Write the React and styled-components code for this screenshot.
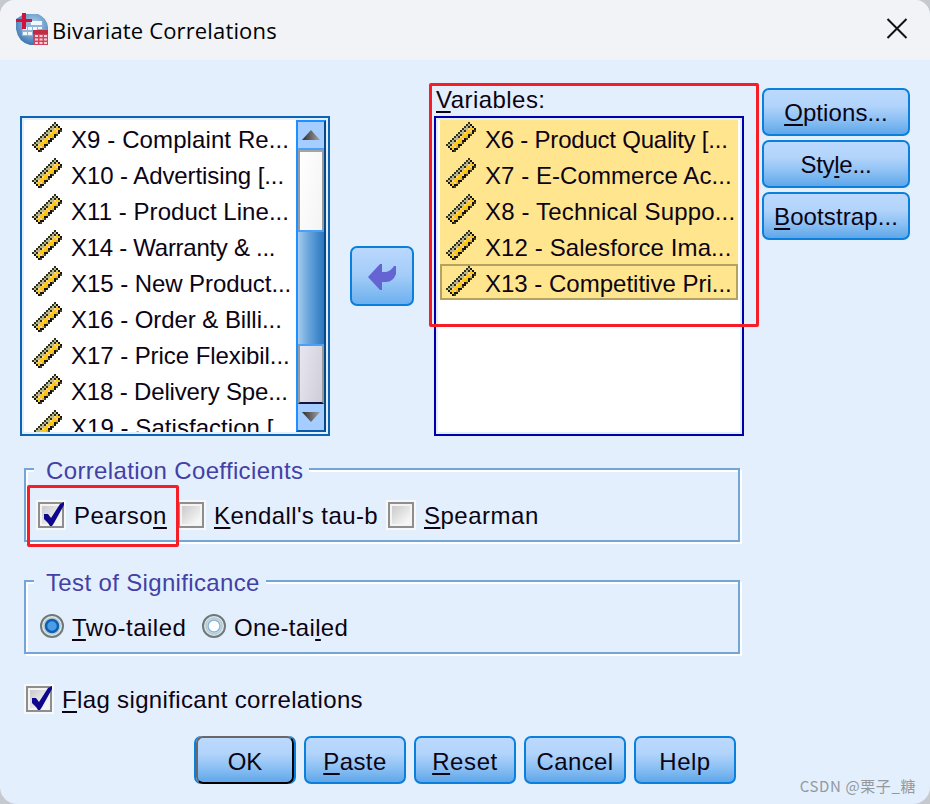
import styled, { createGlobalStyle } from 'styled-components'

const colors = {
  panel: '#e3effc',
  title: '#f1f3f6',
  blue: '#0a7fdc',
  listBorder: '#0c64b4',
  focusBorder: '#0000a8',
  selected: '#ffe68e',
  legend: '#4340a6',
  groupLine: '#74a5d8',
  mark: '#f51e26',
}

const GlobalStyle = createGlobalStyle`
  * {
    box-sizing: border-box;
  }
  body {
    margin: 0;
    background: #c6cacf;
    overflow: hidden;
  }
`

const Dialog = styled.div`
  width: 930px;
  height: 804px;
  overflow: hidden;
  display: flex;
  flex-direction: column;
  position: relative;
  border-radius: 15px 15px 17px 17px;
  background-color: ${colors.panel};
  font-family: 'Liberation Sans', Arial, sans-serif;
  font-size: 24px;
  line-height: 28px;
  color: #0c0414;
`

const TitleBar = styled.header`
  display: flex;
  align-items: center;
  height: 60px;
  padding: 0 22px 2px 16px;
  background-color: ${colors.title};
`

const Title = styled.h1`
  flex: 1;
  margin: 2px 0 0 4px;
  font-family: 'Open Sans', 'Noto Sans', sans-serif;
  font-size: 22px;
  font-weight: 400;
  letter-spacing: 0.15px;
  color: #000;
`

const CloseButton = styled.button`
  display: flex;
  padding: 0;
  border: 0;
  background: none;
`

const Content = styled.main`
  flex: 1;
  display: flex;
  flex-direction: column;
  padding: 28px 20px 20px;
`

const Pickers = styled.section`
  display: flex;
  align-items: flex-start;
  height: 348px;
`

const VariableList = styled.div`
  display: flex;
  width: 310px;
  height: 320px;
  margin-top: ${({ $top }) => $top || 0}px;
  padding: 2px ${({ $focused }) => ($focused ? 4 : 2)}px;
  border: 2px solid ${({ $focused }) => ($focused ? colors.focusBorder : colors.listBorder)};
  background-color: #fff;
  box-shadow: inset 0 0 0 2px ${colors.panel};
`

const Items = styled.ul`
  flex: 1;
  min-width: 0;
  margin: 0;
  padding: 0;
  list-style: none;
  overflow: hidden;
`

const Item = styled.li`
  display: flex;
  align-items: flex-start;
  height: 36px;
  padding: ${({ $current }) => ($current ? '0 0 0 4px' : '2px 0 0 6px')};
  border: ${({ $current }) => ($current ? '2px solid #b3a262' : '0')};
  background-color: ${({ $selected }) => ($selected ? colors.selected : '#fff')};
  line-height: 27px;
  white-space: nowrap;
`

const ItemLeft = styled(Item)`
  padding-left: 8px;
`

const Name = styled.span`
  margin: 4px 0 0 7px;
  letter-spacing: ${({ $track }) => $track || 0}px;
`

const Ruler = styled.svg`
  flex: none;
  width: 32px;
  height: 32px;
`

const ScrollBar = styled.div`
  display: flex;
  flex-direction: column;
  width: 30px;
  height: 312px;
  border: 2px solid #1e90ff;
  border-right-color: #0a4884;
  border-bottom-color: #0a5ca8;
`

const ScrollArrow = styled.button`
  display: flex;
  align-items: center;
  justify-content: center;
  height: 26px;
  padding: 0;
  border: 0;
  background-color: #a5cdff;
`

const Track = styled.div`
  height: ${({ $height }) => $height}px;
  border: 2px solid #979a9e;
  border-width: 2px 2px 0;
  border-top-color: #4aa0f4;
  background: linear-gradient(100deg, ${({ $from }) => $from}, ${({ $to }) => $to});
  box-shadow: ${({ $first }) => ($first ? 'inset 0 2px #a4a4a4' : 'none')};
`

const LastTrack = styled(Track)`
  border-bottom: 2px solid #14143c;
`

const Thumb = styled.div`
  flex: 1;
  border-top: 2px solid #4aa0f4;
  background: linear-gradient(90deg, #a6cbed, #6aa6dc 40%, #3a82c8 85%, #2d78c2);
`

const MoveButton = styled.button`
  display: flex;
  align-items: center;
  justify-content: center;
  width: 64px;
  height: 60px;
  margin: 158px 20px 0;
  padding: 2px 0 0;
  border: 2px solid ${colors.blue};
  border-radius: 7px;
  background: linear-gradient(#bbd8fe, #a2ccf8 50%, #6cb0ef);
`

const Target = styled.div`
  position: relative;
  width: 310px;
`

const TargetLabel = styled.label`
  display: block;
  height: 28px;
  padding-left: 2px;
  line-height: 23px;
  letter-spacing: 0.45px;
`

const Mark = styled.div`
  position: absolute;
  left: ${({ $x }) => $x}px;
  top: ${({ $y }) => $y}px;
  width: ${({ $w }) => $w}px;
  height: ${({ $h }) => $h}px;
  border: 3px solid ${colors.mark};
  border-radius: 2px;
  pointer-events: none;
`

const Side = styled.div`
  display: flex;
  flex-direction: column;
  gap: 4px;
  margin-left: 18px;
`

const PushButton = styled.button`
  width: ${({ $wide }) => ($wide ? 148 : 102)}px;
  height: 48px;
  padding: ${({ $wide }) => ($wide ? 2 : 3)}px 0 0;
  border: 2px solid ${colors.blue};
  border-radius: 7px;
  background: linear-gradient(#bcd9fe, #b2d4fb 35%, #8fc2f4 65%, #5fa7ea);
  font: inherit;
  color: inherit;
  letter-spacing: ${({ $track }) => $track || 0}px;
`

const DefaultButton = styled(PushButton)`
  width: 98px;
  margin: 0 2px;
  border-color: #68686c #000 #000 #68686c;
  box-shadow: -2px 0 ${colors.blue}, 2px 0 ${colors.blue};
`

const Key = styled.span`
  text-decoration: underline;
  text-decoration-thickness: 2px;
  text-underline-offset: 3px;
  text-decoration-skip-ink: none;
`

const Group = styled.section`
  position: relative;
  width: 716px;
  height: 74px;
  margin: ${({ $top }) => $top}px 0 0 4px;
  border: 2px solid ${colors.groupLine};
  box-shadow: inset 2px 2px #fff, 2px 2px #fff;
`

const Legend = styled.h2`
  width: fit-content;
  margin: -12px 0 0 8px;
  padding: 0 6px 0 12px;
  background-color: ${colors.panel};
  font-size: 24px;
  font-weight: 400;
  line-height: 26px;
  color: ${colors.legend};
  letter-spacing: ${({ $track }) => $track || 0}px;
`

const Options = styled.div`
  display: flex;
  padding: ${({ $pad }) => $pad};
`

const Option = styled.label`
  display: flex;
  align-items: center;
  gap: ${({ $gap }) => $gap || 10}px;
  width: ${({ $width }) => ($width ? `${$width}px` : 'auto')};
  height: 28px;
  white-space: nowrap;
  letter-spacing: ${({ $track }) => $track || 0}px;
`

const Box = styled.span`
  flex: none;
  display: flex;
  width: 26px;
  height: 26px;
  margin-bottom: 2px;
  border: 2px solid #8e8e8e;
  background: linear-gradient(135deg, #c4c4c6, #f6f6f6 80%);
  box-shadow: 0 0 0 2px #f6f8fa, inset 0 0 0 2px #f4f4f4;
`

const CheckMark = styled.svg`
  flex: none;
  width: 22px;
  height: 22px;
  overflow: visible;
`

const RadioDot = styled.svg`
  flex: none;
  width: 24px;
  height: 24px;
  margin-bottom: 4px;
`

const FlagRow = styled.div`
  margin: 32px 0 0 6px;
`

const Footer = styled.footer`
  display: flex;
  gap: 8px;
  margin: 22px 0 0 174px;
`

const Watermark = styled.span`
  position: absolute;
  right: 14px;
  bottom: 6px;
  font-family: 'Noto Sans CJK SC', sans-serif;
  font-size: 15px;
  line-height: 24px;
  letter-spacing: 0.6px;
  color: #93999f;
`

// name and letter spacing of every row
const source = [
  ['X9 - Complaint Re...', 0.1],
  ['X10 - Advertising [...', -0.08],
  ['X11 - Product Line...', 0.05],
  ['X14 - Warranty & ...', -0.28],
  ['X15 - New Product...', -0.06],
  ['X16 - Order & Billi...', -0.06],
  ['X17 - Price Flexibil...', -0.06],
  ['X18 - Delivery Spe...', -0.16],
  ['X19 - Satisfaction [...', 0.05],
]

const target = [
  ['X6 - Product Quality [...', -0.22],
  ['X7 - E-Commerce Ac...', 0.06],
  ['X8 - Technical Suppo...', 0.17],
  ['X12 - Salesforce Ima...', 0.1],
  ['X13 - Competitive Pri...', 0],
]

// the scale icon lives on a 16x16 grid, its bands follow x + y
function rulerColor(x, y) {
  const d = x + y
  const along = x - y
  if (d < 11 || d > 18 || Math.abs(along) > 11) return null
  if (d === 18 && along < -10) return null
  if (d === 11) return '#30301c'
  if (d === 18) return Math.abs(along) % 4 === 0 ? '#14140c' : '#45432c'
  if (Math.abs(along) === 11) return '#14140c'
  if (d === 12) return '#b4b894'
  if (d === 13) return Math.abs(along) % 4 === 1 ? '#2c2c1c' : '#b4b880'
  if (d === 14) return along % 4 === 0 ? '#ffd0a0' : '#d4cb80'
  if (d === 17) return Math.abs(along) % 4 === 1 ? '#14140c' : '#e0b430'
  if (d === 16 && along % 8 === 0) return '#ffcba0'
  return '#ffc80c'
}

const rulerCells = []
for (let y = 0; y < 16; y++) {
  for (let x = 0; x < 16; x++) {
    const fill = rulerColor(x, y)
    if (fill) rulerCells.push({ x, y, fill })
  }
}

function RulerIcon() {
  return (
    <Ruler viewBox="0 0 16 16" shapeRendering="crispEdges">
      {rulerCells.map(({ x, y, fill }) => (
        <rect key={`${x}-${y}`} x={x} y={y} width="1" height="1" fill={fill} />
      ))}
    </Ruler>
  )
}

function AppIcon() {
  return (
    <svg width="32" height="32" viewBox="0 0 32 32">
      <defs>
        <radialGradient id="globe" cx="0.55" cy="0.35" r="0.65">
          <stop offset="0" stopColor="#b9d4ea" />
          <stop offset="0.6" stopColor="#6fa0cd" />
          <stop offset="1" stopColor="#3c74b2" />
        </radialGradient>
      </defs>
      <path d="M8 1h14q9 4 10 13v18H14Q2 29 0 16V6z" fill="url(#globe)" />
      <path d="M6 10h20v13H6z" fill="#8fb5da" />
      <path d="M15 8h11v4H15zM7 14h4v3H7zM12 14h4v3h-4zM17 14h4v3h-4zM22 14h4v2h-4zM7 19h4v3H7zM12 19h4v3h-4z" fill="#f2f7fc" />
      <path d="M6 0h4v6h6v3h-6v7H6V9H0V6h6z" fill="#d3123c" />
      <path d="M17 17h15v15H17z" fill="#cc4460" />
      <path d="M17 17h15v4H17z" fill="#c02c44" />
      <path d="M19 22h3v2h-3zM23.500 22h3v2h-3zM28 22h3v2h-3zM19 25.500h3v2h-3zM23.500 25.500h3v2h-3zM28 25.500h3v2h-3zM19 29h3v2h-3zM23.500 29h3v2h-3zM28 29h3v2h-3z" fill="#f8cdd5" />
    </svg>
  )
}

function Checkbox({ checked }) {
  return (
    <Box>
      {checked && (
        <CheckMark viewBox="0 0 22 22">
          <path d="M4 10h4l3 4L20 0l4-2v3L14 19l-2 3h-2l-2-3-4-4z" fill="#10088c" />
        </CheckMark>
      )}
    </Box>
  )
}

function Radio({ checked }) {
  return (
    <RadioDot viewBox="0 0 24 24">
      <circle cx="12" cy="12" r="11" fill="#dcebf0" stroke="#707878" strokeWidth="2" />
      <circle cx="12" cy="12" r="8" fill="none" stroke="#b8c8cc" strokeWidth="1.500" />
      <circle cx="12" cy="12" r="6" fill={checked ? '#4c9ce8' : '#fff'} stroke={checked ? '#0c60b4' : '#88b4dc'} strokeWidth={checked ? 2.5 : 1.5} />
    </RadioDot>
  )
}

function ArrowIcon({ down }) {
  return (
    <svg width="18" height="10" viewBox="0 0 18 10">
      <defs>
        <linearGradient id="tip">
          <stop offset="0" stopColor="#2c2c2c" />
          <stop offset="1" stopColor="#a4a4a4" />
        </linearGradient>
      </defs>
      <path d={down ? 'M0 0h18L9 10z' : 'M9 0l9 10H0z'} fill="url(#tip)" />
    </svg>
  )
}

function App() {
  return (
    <>
      <GlobalStyle />
      <Dialog>
        <TitleBar>
          <AppIcon />
          <Title>Bivariate Correlations</Title>
          <CloseButton aria-label="Close">
            <svg width="22" height="22" viewBox="0 0 22 22" fill="none" stroke="#111" strokeWidth="2">
              <path d="M1.500 1l19 19M20.500 1l-19 19" />
            </svg>
          </CloseButton>
        </TitleBar>
        <Content>
          <Pickers>
            <VariableList $top={28}>
              <Items>
                {source.map(([name, track]) => (
                  <ItemLeft key={name}>
                    <RulerIcon />
                    <Name $track={track}>{name}</Name>
                  </ItemLeft>
                ))}
              </Items>
              <ScrollBar>
                <ScrollArrow aria-label="Up"><ArrowIcon /></ScrollArrow>
                <Track $height={82} $first $from="#ffffff" $to="#f4f4f4" />
                <Thumb />
                <LastTrack $height={60} $from="#e8e6f0" $to="#cfced8" />
                <ScrollArrow aria-label="Down"><ArrowIcon down /></ScrollArrow>
              </ScrollBar>
            </VariableList>
            <MoveButton aria-label="Move">
              <svg width="28" height="26" viewBox="0 0 28 26" fill="#6464d2">
                <path d="M0 13L12 0h2v8h4q5-1 8-6h2v8q-3 8-10 8h-4v8h-2z" />
              </svg>
            </MoveButton>
            <Target>
              <TargetLabel><Key>V</Key>ariables:</TargetLabel>
              <VariableList $focused>
                <Items>
                  {target.map(([name, track], i) => (
                    <Item key={name} $selected $current={i === target.length - 1}>
                      <RulerIcon />
                      <Name $track={track}>{name}</Name>
                    </Item>
                  ))}
                </Items>
              </VariableList>
              <Mark $x={-5} $y={-5} $w={330} $h={244} />
            </Target>
            <Side>
              <PushButton $wide $track={0.1}><Key>O</Key>ptions...</PushButton>
              <PushButton $wide $track={-0.3}>Sty<Key>l</Key>e...</PushButton>
              <PushButton $wide $track={0.1}><Key>B</Key>ootstrap...</PushButton>
            </Side>
          </Pickers>
          <Group $top={32}>
            <Legend $track={0.35}>Correlation Coefficients</Legend>
            <Options $pad="18px 0 0 12px">
              <Option $width={140} $track={0.5}><Checkbox checked /><span>Pearso<Key>n</Key></span></Option>
              <Option $width={210} $track={0.4}><Checkbox /><span><Key>K</Key>endall's tau-b</span></Option>
              <Option $track={0.5}><Checkbox /><span><Key>S</Key>pearman</span></Option>
            </Options>
            <Mark $x={1} $y={15} $w={152} $h={62} />
          </Group>
          <Group $top={38}>
            <Legend $track={0.35}>Test of Significance</Legend>
            <Options $pad="18px 0 0 14px">
              <Option $gap={8} $width={162} $track={0.5}><Radio checked /><span><Key>T</Key>wo-tailed</span></Option>
              <Option $gap={8} $track={0.35}><Radio /><span>One-tai<Key>l</Key>ed</span></Option>
            </Options>
          </Group>
          <FlagRow>
            <Option $track={0.35}>
              <Checkbox checked />
              <span><Key>F</Key>lag significant correlations</span>
            </Option>
          </FlagRow>
          <Footer>
            <DefaultButton>OK</DefaultButton>
            <PushButton $track={0.4}><Key>P</Key>aste</PushButton>
            <PushButton $track={0.6}><Key>R</Key>eset</PushButton>
            <PushButton $track={0.4}>Cancel</PushButton>
            <PushButton $track={0.5}>Help</PushButton>
          </Footer>
        </Content>
        <Watermark>CSDN @栗子_糖</Watermark>
      </Dialog>
    </>
  )
}

export default App
